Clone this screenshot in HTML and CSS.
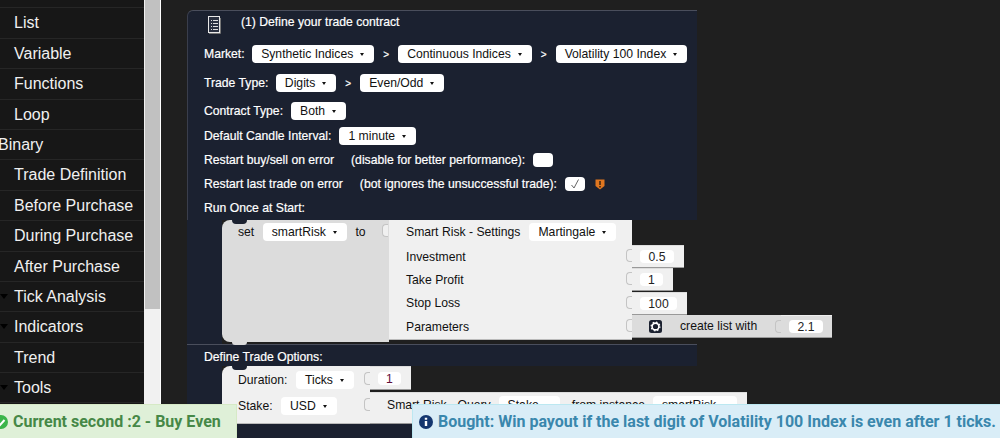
FILE: index.html

```html
<!DOCTYPE html>
<html lang="en">
<head>
  <meta charset="UTF-8">
  <title>Bot Workspace</title>
  <link rel="stylesheet" href="styles.css">
</head>
<body>

<div class="page">
  <div class="sidebar">
    <div class="cat"></div>
    <div class="cat">List</div>
    <div class="cat">Variable</div>
    <div class="cat">Functions</div>
    <div class="cat">Loop</div>
    <div class="cat cat-root">Binary</div>
    <div class="cat">Trade Definition</div>
    <div class="cat">Before Purchase</div>
    <div class="cat">During Purchase</div>
    <div class="cat">After Purchase</div>
    <div class="cat cat-open">Tick Analysis</div>
    <div class="cat cat-open">Indicators</div>
    <div class="cat">Trend</div>
    <div class="cat cat-open">Tools</div>
  </div>

  <div class="scrollbar"><div class="thumb"></div></div>

  <div class="workspace">
    <div class="trade-block">
      <div class="section section-top">
        <div class="title-row">
          <svg class="doc-icon" width="13" height="18" viewBox="0 0 13 18">
            <rect x="0.5" y="0.5" width="11" height="16" fill="#2a3040" stroke="#e8e8e8"/>
            <path d="M1 17.5h11.5V2" fill="none" stroke="#777"/>
            <path d="M3 4.5h1M5 4.5h5M3 7.5h1M5 7.5h5M3 10.5h1M5 10.5h5M3 13.5h1M5 13.5h5" stroke="#ddd"/>
          </svg>
          <span class="title">(1) Define your trade contract</span>
        </div>
        <div class="row row-market">
          <span>Market:</span>
          <span class="pill">Synthetic Indices</span>
          <span class="sep">&gt;</span>
          <span class="pill">Continuous Indices</span>
          <span class="sep">&gt;</span>
          <span class="pill">Volatility 100 Index</span>
        </div>
        <div class="row row-trade">
          <span>Trade Type:</span>
          <span class="pill">Digits</span>
          <span class="sep">&gt;</span>
          <span class="pill">Even/Odd</span>
        </div>
        <div class="row row-contract">
          <span>Contract Type:</span>
          <span class="pill">Both</span>
        </div>
        <div class="row row-candle">
          <span>Default Candle Interval:</span>
          <span class="pill">1 minute</span>
        </div>
        <div class="row">
          <span>Restart buy/sell on error</span>
          <span class="note">(disable for better performance):</span>
          <span class="check"></span>
        </div>
        <div class="row">
          <span>Restart last trade on error</span>
          <span class="note">(bot ignores the unsuccessful trade):</span>
          <span class="check">
            <svg width="12" height="12" viewBox="0 0 12 12"><path d="M2.5 7l2.5 3L9.5 1.5" fill="none" stroke="#666"/></svg>
          </span>
          <svg class="warn" width="10" height="11" viewBox="0 0 10 11">
            <path d="M0.5 0.5h9v6.5L5 10.5 0.5 7z" fill="#e0761f"/>
            <path d="M5 2v4M5 7v1.5" stroke="#3a2410" stroke-width="1.5"/>
          </svg>
        </div>
        <div class="row">Run Once at Start:</div>
      </div>

      <div class="statement statement-run">
        <div class="gutter"></div>
        <div class="block set-block">
          <div class="set-row">
            <span>set</span>
            <span class="pill">smartRisk</span>
            <span>to</span>
          </div>
        </div>
        <div class="settings">
          <span class="tab tab-settings"></span>
          <div class="settings-row settings-head">
            <span>Smart Risk - Settings</span>
            <span class="pill">Martingale</span>
          </div>
          <div class="settings-row settings-first">
            <span>Investment</span>
            <span class="tab"></span>
            <div class="value val-invest"><span class="field">0.5</span></div>
          </div>
          <div class="settings-row">
            <span>Take Profit</span>
            <span class="tab"></span>
            <div class="value val-profit"><span class="field">1</span></div>
          </div>
          <div class="settings-row">
            <span>Stop Loss</span>
            <span class="tab"></span>
            <div class="value val-loss"><span class="field">100</span></div>
          </div>
          <div class="settings-row">
            <span>Parameters</span>
            <span class="tab"></span>
            <div class="value list-block">
              <svg class="gear" width="13" height="13" viewBox="0 0 13 13">
                <rect width="13" height="13" rx="2.5" fill="#1b2130"/>
                <circle cx="6.5" cy="6.5" r="3.4" fill="none" stroke="#fff" stroke-width="1.6"/>
                <circle cx="6.5" cy="6.5" r="4.4" fill="none" stroke="#fff" stroke-width="1.2" stroke-dasharray="1.6 1.85"/>
              </svg>
              <span class="list-label">create list with</span>
              <div class="list-item"><span class="tab"></span><span class="field">2.1</span></div>
            </div>
          </div>
        </div>
      </div>

      <div class="section section-options">
        <div class="row">Define Trade Options:</div>
      </div>

      <div class="statement statement-options">
        <div class="gutter"></div>
        <div class="block options-block">
          <div class="option-row">
            <span>Duration:</span>
            <span class="pill">Ticks</span>
            <span class="tab"></span>
            <div class="value val-ticks"><span class="field">1</span></div>
          </div>
          <div class="option-row option-stake">
            <span>Stake:</span>
            <span class="pill">USD</span>
            <span class="tab"></span>
            <div class="value query-block">
              <span>Smart Risk - Query</span>
              <span class="pill">Stake</span>
              <span class="query-from">from instance</span>
              <span class="pill">smartRisk</span>
            </div>
          </div>
        </div>
      </div>
      <div class="section section-end"></div>
    </div>
  </div>

  <div class="toast toast-success">
    <svg class="toast-icon" width="14" height="14" viewBox="0 0 14 14">
      <circle cx="7" cy="7" r="7" fill="#3bb54a"/>
      <path d="M3.5 7.5l2.5 2.5 4.5-5" fill="none" stroke="#fff" stroke-width="2"/>
    </svg>
    Current second :2 - Buy Even
  </div>
  <div class="toast toast-info">
    <svg class="toast-icon" width="14" height="14" viewBox="0 0 14 14">
      <circle cx="7" cy="7" r="7" fill="#14366f"/>
      <path d="M7 2.8v2M7 6v5" stroke="#fff" stroke-width="2.4"/>
    </svg>
    Bought: Win payout if the last digit of Volatility 100 Index is even after 1 ticks.
  </div>
</div>

</body>
</html>
```

FILE: styles.css

```css
html, body {
  margin: 0;
  padding: 0;
}
body {
  font-family: "Liberation Sans", Arial, sans-serif;
  overflow: hidden;
}
.page {
  display: flex;
  position: relative;
  width: 1000px;
  height: 438px;
  overflow: hidden;
  background-color: #1f1f1f;
}

/* toolbox */
.sidebar {
  width: 144px;
  margin-top: -22px;
  flex-shrink: 0;
  background-color: #171717;
}
.cat {
  height: 30.4px;
  box-sizing: border-box;
  position: relative;
  padding-left: 14px;
  line-height: 29px;
  font-size: 16px;
  color: #f0f0f0;
  white-space: nowrap;
  border-bottom: 1px solid #262626;
}
.cat-root {
  padding-left: 0;
  text-indent: -2px;
}
.cat-open::before {
  content: "";
  position: absolute;
  left: 0;
  top: 12px;
  border-left: 4px solid transparent;
  border-right: 4px solid transparent;
  border-top: 5px solid #000;
}
.scrollbar {
  width: 15px;
  flex-shrink: 0;
  border-left: 1px solid #f1f1f1;
  background-color: #f1f1f1;
}
.thumb {
  height: 309px;
  background-color: #c1c1c1;
}
.workspace {
  flex: 1;
  border-left: 1px solid #fff;
  padding-left: 26px;
  padding-top: 10px;
}

/* trade definition block */
.trade-block {
  width: 510px;
  font-size: 12.2px;
  color: #fff;
}
.section {
  background-color: #1b2130;
  padding-left: 17px;
  -webkit-text-stroke: 0.2px #fff;
}
.section-top {
  border-top: 1px solid #4a4e5c;
  border-left: 1px solid #3a3e4c;
  border-top-left-radius: 6px;
  padding-left: 16px;
}
.title-row {
  display: flex;
  height: 31px;
}
.doc-icon {
  margin: 5px 0 0 4px;
}
.title {
  margin: 4px 0 0 20px;
}
.row {
  display: flex;
  align-items: center;
  gap: 8px;
  height: 24px;
}
.row-market {
  gap: 7.5px;
}
.row-trade {
  margin-top: 5px;
  gap: 7.5px;
}
.row-contract {
  margin-top: 4px;
}
.row-candle {
  margin-top: 1px;
}
.sep {
  font-size: 10px;
  margin: 0 1.5px;
}
.note {
  margin-left: 9px;
}
.pill {
  display: inline-flex;
  align-items: center;
  height: 18px;
  box-sizing: border-box;
  padding: 0 10px 0 9px;
  background-color: #fff;
  border-radius: 4px;
  color: #111;
  font-size: 12.2px;
  white-space: nowrap;
  -webkit-text-stroke: 0;
}
.pill::after {
  content: "";
  margin-left: 7px;
  border-left: 2.5px solid transparent;
  border-right: 2.5px solid transparent;
  border-top: 3px solid #111;
}
.check {
  display: inline-flex;
  align-items: center;
  justify-content: center;
  width: 20px;
  height: 14px;
  background-color: #fff;
  border-radius: 4px;
}
.warn {
  margin-left: 2px;
}

/* nested blockly blocks */
.statement {
  display: flex;
  position: relative;
  color: #111;
}
.gutter {
  width: 35px;
  background-color: #1b2130;
}
.statement-run {
  height: 124px;
}
.block {
  position: relative;
}
.block::before {
  content: "";
  position: absolute;
  left: 10px;
  top: 0;
  width: 15px;
  height: 4px;
  background-color: #1b2130;
  border-radius: 0 0 7px 7px;
}
.set-block {
  width: 167px;
  height: 122px;
  background-color: #dcdcdc;
  border-radius: 8px 0 0 8px;
}
.set-block::after {
  content: "";
  position: absolute;
  left: 10px;
  bottom: -3px;
  width: 15px;
  height: 3px;
  background-color: #dcdcdc;
  border-radius: 0 0 7px 7px;
}
.set-row {
  display: flex;
  align-items: center;
  gap: 8.5px;
  height: 18px;
  margin: 3px 0 0 16px;
}
.settings {
  position: relative;
  width: 243px;
  height: 119px;
  background-color: #f0f0f0;
  border-bottom: 1px solid #bbb;
}
.settings-row {
  display: flex;
  align-items: center;
  position: relative;
  height: 23.3px;
  padding-left: 17px;
}
.settings-head {
  height: 18px;
  margin-top: 3px;
  gap: 9px;
}
.settings-first {
  margin-top: 4px;
}
.tab {
  position: absolute;
  right: 0;
  top: 4px;
  width: 6px;
  height: 13px;
  box-sizing: border-box;
  background-color: #f0f0f0;
  border: 1px solid #c4c4c4;
  border-right: 0;
  border-radius: 4px 0 0 4px;
}
.tab-settings {
  left: -7px;
  right: auto;
}
.value {
  position: absolute;
  left: 100%;
  top: 0;
  display: flex;
  align-items: center;
  box-sizing: border-box;
  height: 23px;
  background-color: #f0f0f0;
  border-bottom: 1px solid #999;
  border-top: 1px solid #ddd;
  white-space: nowrap;
}
.field {
  display: inline-block;
  height: 13px;
  line-height: 15px;
  background-color: #fff;
  border-radius: 4px;
  margin-left: 8px;
  padding: 0 8px;
  color: #222;
  text-align: center;
}
.val-invest {
  width: 52px;
}
.val-invest .field {
  width: 18px;
}
.val-profit {
  width: 41px;
}
.val-profit .field {
  width: 7px;
}
.val-loss {
  width: 55px;
}
.val-loss .field {
  width: 21px;
}
.list-block {
  width: 149px;
  background-color: #dcdcdc;
  padding-left: 17px;
}
.gear {
  flex-shrink: 0;
}
.list-label {
  margin-left: 18px;
}
.list-item {
  position: absolute;
  left: 149px;
  top: -1px;
  display: flex;
  align-items: center;
  box-sizing: border-box;
  width: 51px;
  height: 23px;
  background-color: #dcdcdc;
  border-bottom: 1px solid #999;
  border-top: 1px solid #eee;
}
.list-item .tab {
  right: auto;
  left: -6px;
  background-color: #dcdcdc;
}
.list-item .field {
  width: 18px;
}
.section-options {
  height: 21px;
  border-top: 1px solid #4a4e5c;
}
.statement-options {
  height: 58px;
}
.options-block {
  width: 148px;
  height: 58px;
  background-color: #f0f0f0;
  border-radius: 8px 0 0 8px;
  border-bottom: 1px solid #bbb;
  box-sizing: border-box;
}
.option-row {
  display: flex;
  align-items: center;
  position: relative;
  height: 18px;
  margin-top: 5px;
  padding-left: 16px;
  gap: 8.5px;
}
.option-stake {
  margin-top: 8px;
}
.option-row .tab {
  top: 1px;
}
.val-ticks {
  width: 41px;
  height: 24px;
  top: -5px;
}
.val-ticks .field {
  width: 7px;
  color: #60103a;
}
.query-block {
  width: 377px;
  height: 32px;
  top: -5px;
  gap: 8px;
  padding: 0 9px 6px 17px;
}
.query-block .pill {
  flex-shrink: 0;
}
.query-from {
  margin-left: 4px;
}
.section-end {
  height: 20px;
}

/* notifications */
.toast {
  position: absolute;
  bottom: 0;
  display: flex;
  align-items: center;
  gap: 5px;
  height: 34px;
  box-sizing: border-box;
  font-family: Roboto, "Liberation Sans", sans-serif;
  font-size: 16px;
  font-weight: 700;
  white-space: nowrap;
  border-top: 1px solid;
}
.toast-success {
  left: 0;
  width: 237px;
  background-color: #dff0d8;
  color: #468847;
  border-color: #d6e9c6;
  border-right: 1px solid #d6e9c6;
}
.toast-success .toast-icon {
  margin-left: -6px;
}
.toast-info {
  right: 0;
  width: 588px;
  padding-left: 6px;
  background-color: #d9edf7;
  color: #3a87ad;
  border-color: #bce8f1;
  border-left: 1px solid #bce8f1;
}
```
